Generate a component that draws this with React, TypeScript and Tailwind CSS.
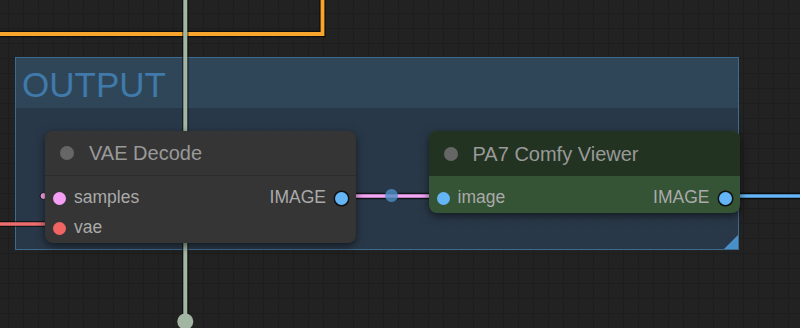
import React from "react";

function Dot({ color, ring = false }: { color: string; ring?: boolean }) {
  return (
    <span
      className={`block w-[13px] h-[13px] rounded-full shrink-0 ${ring ? "ring-[1.5px] ring-[#111]" : ""}`}
      style={{ backgroundColor: color }}
    />
  );
}

function SlotRow({
  inName,
  inColor,
  outName,
  outColor,
}: {
  inName?: string;
  inColor?: string;
  outName?: string;
  outColor?: string;
}) {
  return (
    <div className="h-[30px] flex items-center justify-between pl-[8px] pr-[8px]">
      <div className="flex items-center gap-[8px]">
        {inName && inColor ? (
          <>
            <Dot color={inColor} />
            <span className="text-[17.5px] text-[#aaaaaa] leading-none">{inName}</span>
          </>
        ) : null}
      </div>
      <div className="flex items-center gap-[9px]">
        {outName && outColor ? (
          <>
            <span className="text-[17.5px] text-[#aaaaaa] leading-none">{outName}</span>
            <Dot color={outColor} ring />
          </>
        ) : null}
      </div>
    </div>
  );
}

export default function App() {
  return (
    <div
      className="relative w-[800px] h-[328px] overflow-hidden bg-[#222222] bg-[linear-gradient(to_right,#1d1d1d_1px,transparent_1px),linear-gradient(to_bottom,#1d1d1d_1px,transparent_1px)] bg-[size:15px_15px] bg-[position:8px_13px]"
      style={{ fontFamily: '"Liberation Sans", Arial, sans-serif' }}
    >
      {/* Group */}
      <div className="absolute left-[15px] top-[57px] w-[724px] h-[193px] border-[1.5px] border-[#3d6a8f] flex flex-col">
        <div className="h-[50px] bg-[#304a5e]/90 flex items-center pl-[6px]">
          <span className="text-[35px] leading-none text-[#3f7aab] mt-[2px]">OUTPUT</span>
        </div>
        <div className="flex-1 bg-[#2a3b4c]/90" />
        <div className="absolute right-0 bottom-0 w-0 h-0 border-l-[14px] border-l-transparent border-b-[14px] border-b-[#4a90c8]" />
      </div>

      {/* Links */}
      <svg className="absolute inset-0" width={800} height={328} viewBox="0 0 800 328">
        <path d="M0 34 H322.5 V0" fill="none" stroke="rgba(0,0,0,0.55)" strokeWidth={6.5} />
        <path d="M0 34 H322.5 V0" fill="none" stroke="#f7a52c" strokeWidth={3.8} />

        <line x1={185.3} y1={0} x2={185.3} y2={322} stroke="rgba(0,0,0,0.5)" strokeWidth={6.5} />
        <line x1={185.3} y1={0} x2={185.3} y2={322} stroke="#a3b5a3" strokeWidth={4} />
        <circle cx={185.3} cy={321.5} r={8} fill="#a3b5a3" />

        <line x1={0} y1={224} x2={52} y2={224} stroke="rgba(0,0,0,0.55)" strokeWidth={6} />
        <line x1={0} y1={224} x2={52} y2={224} stroke="#ee6e6e" strokeWidth={3.5} />

        <circle cx={43.5} cy={196} r={3.5} fill="#f4a6f4" stroke="#111" strokeWidth={1} />

        <line x1={341} y1={196} x2={442} y2={196} stroke="rgba(0,0,0,0.6)" strokeWidth={6.5} />
        <line x1={341} y1={196} x2={442} y2={196} stroke="#f4a6f4" strokeWidth={3.5} />
        <circle cx={391.5} cy={195.5} r={6.5} fill="#4f8fc6" fillOpacity={0.8} />

        <line x1={725} y1={196} x2={800} y2={196} stroke="rgba(0,0,0,0.6)" strokeWidth={6.5} />
        <line x1={725} y1={196} x2={800} y2={196} stroke="#64b5f6" strokeWidth={3.5} />
      </svg>

      {/* VAE Decode node */}
      <div className="absolute left-[45px] top-[131px] w-[311px] h-[112px] rounded-[8px] bg-[#353535] shadow-[0_3px_8px_rgba(0,0,0,0.55)] flex flex-col">
        <div className="h-[45px] flex items-center pl-[15px] gap-[15px] border-b border-[#2c2c2c]">
          <span className="block w-[14px] h-[14px] rounded-full bg-[#666666]" />
          <span className="text-[20px] leading-none text-[#999999]">VAE Decode</span>
        </div>
        <div className="pt-[7px] flex flex-col">
          <SlotRow inName="samples" inColor="#f49ef4" outName="IMAGE" outColor="#64b5f6" />
          <SlotRow inName="vae" inColor="#f06464" />
        </div>
      </div>

      {/* PA7 Comfy Viewer node */}
      <div className="absolute left-[428.5px] top-[131px] w-[311px] h-[82px] rounded-[8px] overflow-hidden bg-[#355335] shadow-[0_3px_8px_rgba(0,0,0,0.55)] flex flex-col">
        <div className="h-[45px] flex items-center pl-[15px] gap-[15px] bg-[#233322]">
          <span className="block w-[14px] h-[14px] rounded-full bg-[#666666]" />
          <span className="text-[20px] leading-none text-[#999999]">PA7 Comfy Viewer</span>
        </div>
        <div className="pt-[7px] flex flex-col">
          <SlotRow inName="image" inColor="#64b5f6" outName="IMAGE" outColor="#64b5f6" />
        </div>
      </div>
    </div>
  );
}
